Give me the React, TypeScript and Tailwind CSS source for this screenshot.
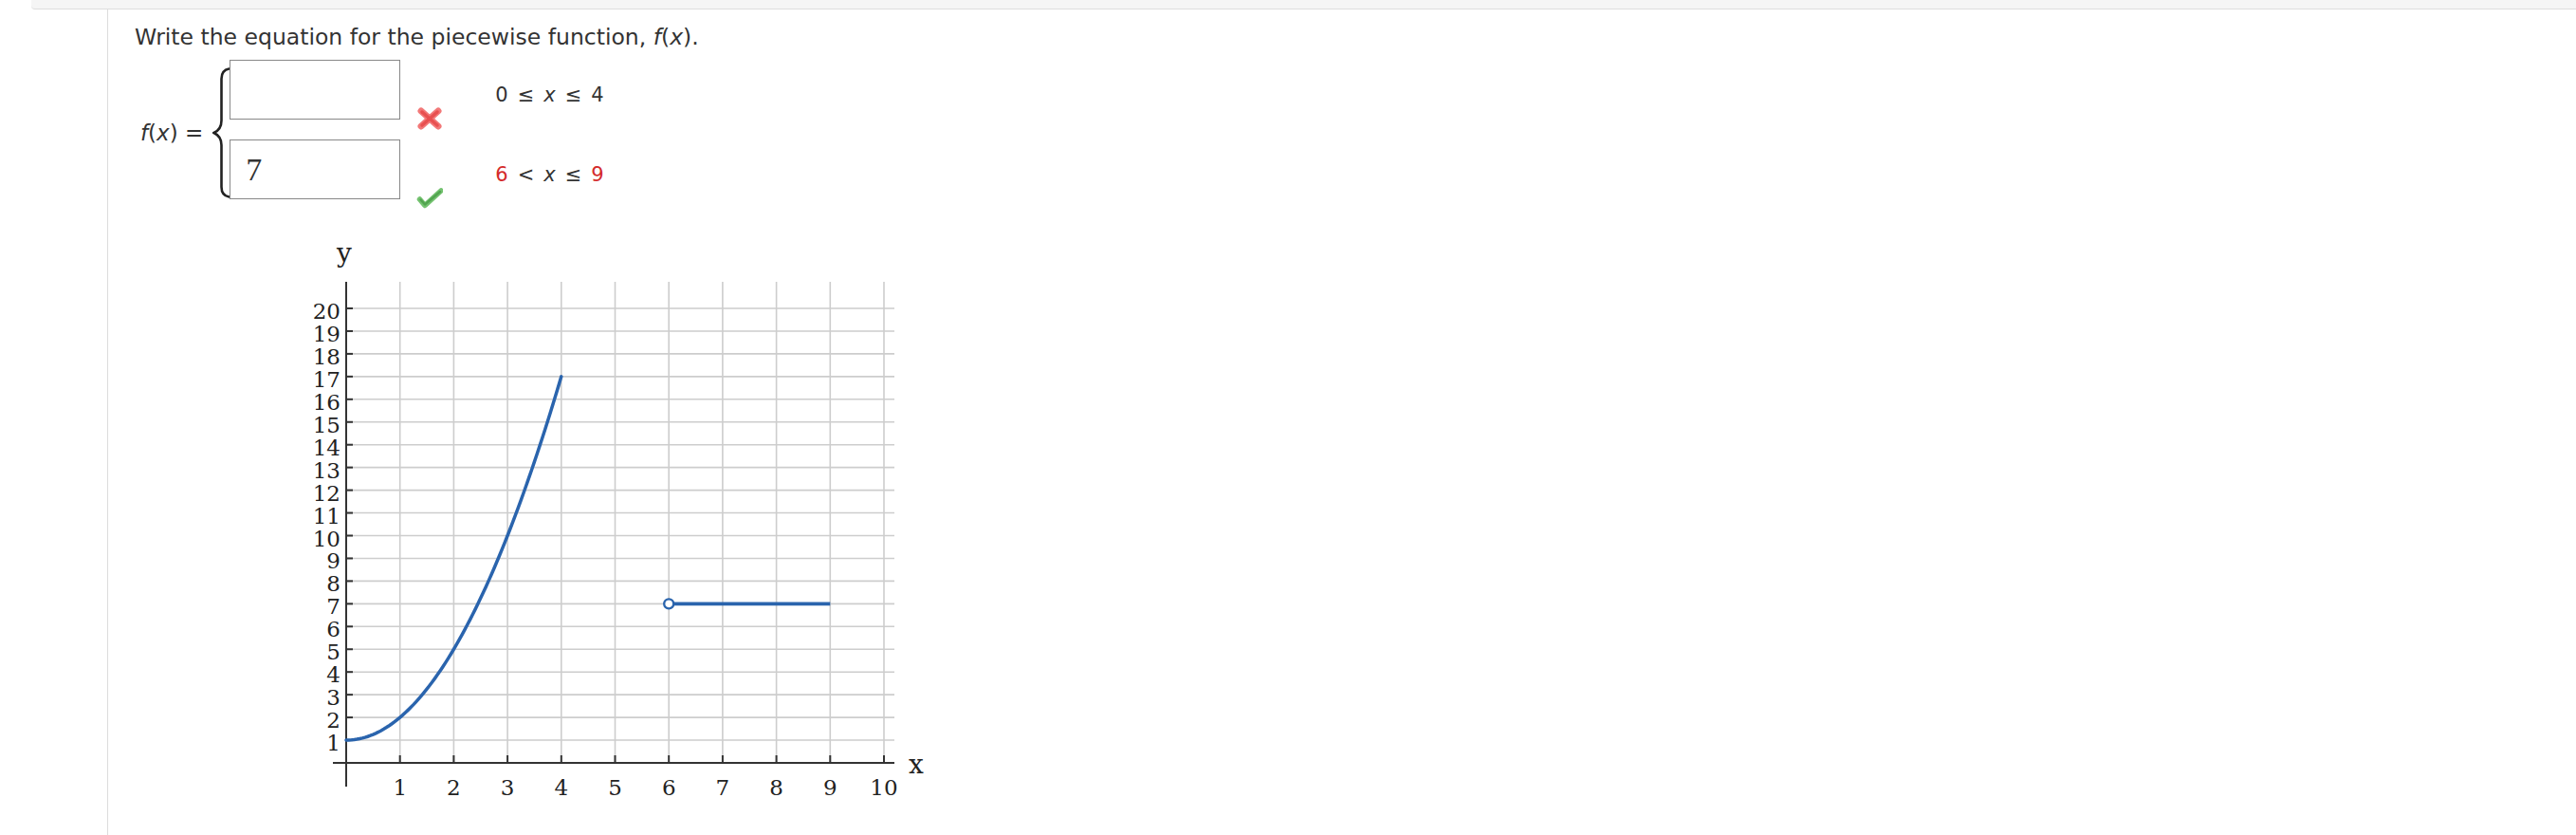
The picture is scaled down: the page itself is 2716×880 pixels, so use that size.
import React from "react";

const X0 = 365;
const Y0 = 804;
const SX = 56.7;
const SY = 23.95;
const px = (x: number) => X0 + SX * x;
const py = (y: number) => Y0 - SY * y;

function curvePath() {
  const pts: string[] = [];
  for (let i = 0; i <= 80; i++) {
    const x = (4 * i) / 80;
    const y = x * x + 1;
    pts.push(`${i === 0 ? "M" : "L"}${px(x).toFixed(2)} ${py(y).toFixed(2)}`);
  }
  return pts.join(" ");
}

function Brace() {
  return (
    <svg width="19" height="138" viewBox="0 0 19 138" className="block">
      <path
        d="M17.5 1.5 C12 2.5 9.5 6 9.5 12 L9.5 56 C9.5 63 6 67 1.5 69 C6 71 9.5 75 9.5 82 L9.5 126 C9.5 132 12 135.5 17.5 136.5"
        fill="none"
        stroke="#222"
        strokeWidth="2.6"
        strokeLinecap="round"
      />
    </svg>
  );
}

function CrossIcon() {
  return (
    <svg width="28" height="24" viewBox="0 0 28 24" className="block">
      <g stroke="#f27878" strokeWidth="7" strokeLinecap="round">
        <line x1="5" y1="4" x2="23" y2="20" />
        <line x1="23" y1="4" x2="5" y2="20" />
      </g>
      <g stroke="#e85050" strokeWidth="3.5" strokeLinecap="round">
        <line x1="6" y1="5" x2="22" y2="19" />
        <line x1="22" y1="5" x2="6" y2="19" />
      </g>
    </svg>
  );
}

function CheckIcon() {
  return (
    <svg width="28" height="22" viewBox="0 0 28 22" className="block">
      <path
        d="M3.5 12 L9 18.5 L26 3"
        fill="none"
        stroke="#74c270"
        strokeWidth="5.5"
        strokeLinecap="round"
        strokeLinejoin="round"
      />
      <path
        d="M4.5 12.5 L9 17.5 L25 4"
        fill="none"
        stroke="#52a550"
        strokeWidth="2.5"
        strokeLinecap="round"
        strokeLinejoin="round"
      />
    </svg>
  );
}

function Condition({ red }: { red: boolean }) {
  const numCls = red ? "text-[#d42b2b]" : "text-[#333333]";
  return (
    <div className="flex items-center gap-[10px] text-[21px] leading-[24px] font-['DejaVu_Sans',sans-serif] text-[#333333]">
      <span className={numCls}>{red ? "6" : "0"}</span>
      <span>{red ? "<" : "≤"}</span>
      <span className="italic">x</span>
      <span>≤</span>
      <span className={numCls}>{red ? "9" : "4"}</span>
    </div>
  );
}

function Graph() {
  const xs = Array.from({ length: 10 }, (_, i) => i + 1);
  const ys = Array.from({ length: 20 }, (_, i) => i + 1);
  return (
    <svg
      width="660"
      height="600"
      viewBox="330 250 660 600"
      className="block ml-[188px] mt-[40px] font-['DejaVu_Serif',serif]"
    >
      <g stroke="#cdcdcd" strokeWidth="1.6">
        {xs.map((i) => (
          <line key={"v" + i} x1={px(i)} y1={297} x2={px(i)} y2={Y0} />
        ))}
        {ys.map((j) => (
          <line key={"h" + j} x1={X0} y1={py(j)} x2={943} y2={py(j)} />
        ))}
      </g>
      <g stroke="#333" strokeWidth="2">
        <line x1={X0} y1={297} x2={X0} y2={829} />
        <line x1={351} y1={Y0} x2={943} y2={Y0} />
        {xs.map((i) => (
          <line key={"tx" + i} x1={px(i)} y1={796} x2={px(i)} y2={Y0} />
        ))}
        {ys.map((j) => (
          <line key={"ty" + j} x1={X0} y1={py(j)} x2={372} y2={py(j)} />
        ))}
      </g>
      <g fill="#222" fontSize="23">
        {xs.map((i) => (
          <text key={"lx" + i} x={px(i)} y={838} textAnchor="middle">
            {i}
          </text>
        ))}
        {ys.map((j) => (
          <text key={"ly" + j} x={359} y={py(j) + 11} textAnchor="end">
            {j}
          </text>
        ))}
      </g>
      <text x={363} y={276} textAnchor="middle" fontSize="28" fill="#222">
        y
      </text>
      <text x={966} y={815} textAnchor="middle" fontSize="28" fill="#222">
        x
      </text>
      <path d={curvePath()} fill="none" stroke="#2a64ad" strokeWidth="3.5" strokeLinecap="round" />
      <line x1={px(6) + 5} y1={py(7)} x2={px(9)} y2={py(7)} stroke="#2a64ad" strokeWidth="3.8" />
      <circle cx={px(6)} cy={py(7)} r="5" fill="#ffffff" stroke="#2a64ad" strokeWidth="2.4" />
    </svg>
  );
}

export default function App() {
  return (
    <div className="w-[2716px] h-[880px] bg-white flex flex-col overflow-hidden">
      <div className="ml-[33px] h-[10px] shrink-0 bg-[#f5f5f5] border-b border-[#dddddd] rounded-bl-[4px]" />
      <div className="flex-1 ml-[113px] border-l border-[#dddddd] pl-[28px]">
        <div className="mt-[15px] text-[23.5px] leading-[28px] font-['DejaVu_Sans',sans-serif] text-[#333333] whitespace-nowrap">
          Write the equation for the piecewise function, <span className="italic">f</span>(<span className="italic">x</span>).
        </div>

        <div className="flex items-start mt-[10px]">
          <div className="ml-[6px] mt-[63px] text-[23px] leading-[28px] font-['DejaVu_Sans',sans-serif] text-[#333333] whitespace-nowrap">
            <span className="italic">f</span>(<span className="italic">x</span>) =
          </div>
          <div className="ml-[10px] mt-[8px]">
            <Brace />
          </div>
          <div className="flex flex-col gap-[21px] -ml-[1px]">
            <div className="flex items-start h-[63px]">
              <div className="w-[180px] h-[63px] border border-[#888888] bg-white" />
              <div className="ml-[17px] mt-[50px] w-[28px]">
                <CrossIcon />
              </div>
              <div className="ml-[55px] mt-[25px]">
                <Condition red={false} />
              </div>
            </div>
            <div className="flex items-start h-[63px]">
              <div className="w-[180px] h-[63px] border border-[#888888] bg-white flex items-center pl-[16px] text-[34px] leading-[40px] font-['Liberation_Serif',serif] text-[#333333]">
                7
              </div>
              <div className="ml-[17px] mt-[51px] w-[28px]">
                <CheckIcon />
              </div>
              <div className="ml-[55px] mt-[25px]">
                <Condition red={true} />
              </div>
            </div>
          </div>
        </div>

        <Graph />
      </div>
    </div>
  );
}
